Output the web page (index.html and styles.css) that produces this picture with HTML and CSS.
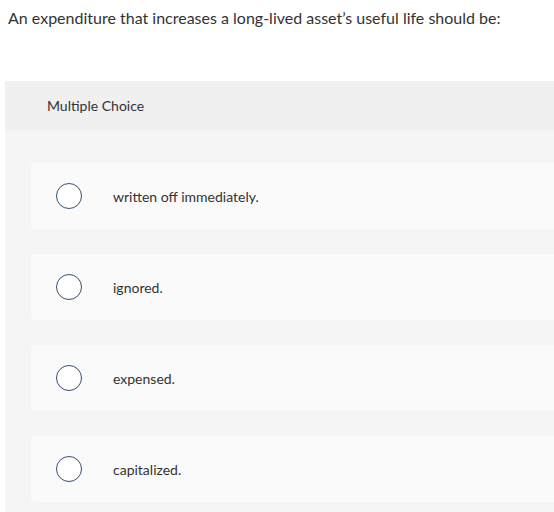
FILE: index.html
```html
<!DOCTYPE html>
<html>
<head>
<meta charset="utf-8">
<link rel="stylesheet" href="styles.css">
</head>
<body>
<p class="question">An expenditure that increases a long-lived asset’s useful life should be:</p>
<div class="panel">
  <div class="panel-head">Multiple Choice</div>
  <div class="options">
    <div class="option"><span class="radio"></span><span class="label">written off immediately.</span></div>
    <div class="option"><span class="radio"></span><span class="label">ignored.</span></div>
    <div class="option"><span class="radio"></span><span class="label">expensed.</span></div>
    <div class="option"><span class="radio"></span><span class="label">capitalized.</span></div>
  </div>
</div>
</body>
</html>
```
FILE: styles.css
```css
html, body {
  margin: 0;
  padding: 0;
  background: #ffffff;
  overflow: hidden;
}
body {
  font-family: Lato, "Open Sans", sans-serif;
  color: #333333;
}
.question {
  margin: 0;
  padding: 8px 0 0 8px;
  font-size: 16px;
  line-height: 20px;
  height: 81px;
  box-sizing: border-box;
}
.panel {
  margin-left: 5px;
  background: #f5f5f5;
}
.panel-head {
  background: #f0f0f0;
  height: 49px;
  box-sizing: border-box;
  padding: 16px 0 0 42px;
  font-size: 14px;
  line-height: 18px;
}
.options {
  padding: 33px 0 20px 26px;
  display: flex;
  flex-direction: column;
  gap: 25px;
}
.option {
  background: #fafafa;
  height: 66px;
  display: flex;
  align-items: center;
  border-radius: 2px 0 0 2px;
}
.radio {
  width: 24px;
  height: 24px;
  border: 1.5px solid #34506e;
  border-radius: 50%;
  background: #ffffff;
  margin-left: 25px;
  flex: none;
}
.label {
  margin-left: 31px;
  font-size: 14px;
}
```
